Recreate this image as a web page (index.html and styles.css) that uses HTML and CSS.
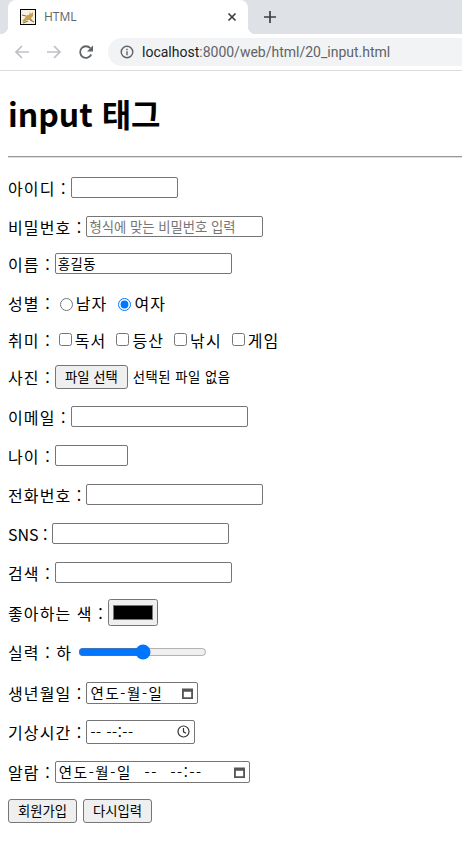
FILE: index.html
```html
<!DOCTYPE html>
<html lang="ko">
<head>
<meta charset="UTF-8">
<meta name="viewport" content="width=device-width, initial-scale=1.0">
<title>HTML</title>
<link rel="stylesheet" href="styles.css">
</head>
<body>
<div class="browser-bar">
    <div class="tab-strip">
        <div class="tab">
            <svg class="favicon" width="16" height="16" viewBox="0 0 16 16">
                <rect x="0.5" y="0.5" width="15" height="15" fill="#f6f1e4" stroke="#000"/>
                <path d="M2 12 L5 9 L7 6 L9 6 L10 3 L11 5 L13 3 L13 7 L11 9 L13 12 L10 11 L7 11 L4 13 Z" fill="#c9a04e"/>
                <path d="M2 6 L6 7 M10 11 L14 13 M3 14 L8 12" stroke="#7c6a45" fill="none"/>
            </svg>
            <span class="tab-title">HTML</span>
            <svg class="tab-close" width="10" height="10" viewBox="0 0 10 10">
                <path d="M1.5 1.5 L8.5 8.5 M8.5 1.5 L1.5 8.5" stroke="#3c4043" stroke-width="1.7" fill="none"/>
            </svg>
        </div>
        <svg class="new-tab" width="12" height="12" viewBox="0 0 12 12">
            <path d="M6 0 V12 M0 6 H12" stroke="#3c4043" stroke-width="1.7" fill="none"/>
        </svg>
    </div>
    <div class="toolbar">
        <svg class="nav-icon" width="16" height="16" viewBox="0 0 16 16">
            <path d="M15 8 H2 M8 2 L2 8 L8 14" stroke="#bdc1c6" stroke-width="1.7" fill="none"/>
        </svg>
        <svg class="nav-icon" width="16" height="16" viewBox="0 0 16 16">
            <path d="M1 8 H14 M8 2 L14 8 L8 14" stroke="#bdc1c6" stroke-width="1.7" fill="none"/>
        </svg>
        <svg class="nav-icon" width="16" height="16" viewBox="0 0 16 16">
            <path d="M13.2 10.5 A5.8 5.8 0 1 1 12.3 4.2" stroke="#5f6368" stroke-width="1.8" fill="none"/>
            <path d="M15 1.5 V7.5 H9 Z" fill="#5f6368"/>
        </svg>
        <div class="omnibox">
            <svg width="14" height="14" viewBox="0 0 14 14">
                <circle cx="7" cy="7" r="5.8" stroke="#5f6368" stroke-width="1.4" fill="none"/>
                <path d="M7 6.2 V10.2 M7 3.8 V5.2" stroke="#5f6368" stroke-width="1.4" fill="none"/>
            </svg>
            <span class="url">localhost<span class="url-path">:8000/web/html/20_input.html</span></span>
        </div>
    </div>
</div>

<div class="page">
    <h1>input 태그</h1>
    <hr>
    <form>
        <div class="row"><span class="label">아이디 :</span><input type="text" class="field short"></div>
        <div class="row tight"><span class="label">비밀번호 :</span><input type="password" class="field" placeholder="형식에 맞는 비밀번호 입력"></div>
        <div class="row"><span class="label">이름 :</span><input type="text" class="field" value="홍길동"></div>
        <div class="row tight">
            <span class="label">성별 :</span>
            <label class="choice"><input type="radio" name="gender">남자</label>
            <label class="choice"><input type="radio" name="gender" checked>여자</label>
        </div>
        <div class="row tight">
            <span class="label">취미 :</span>
            <label class="choice"><input type="checkbox">독서</label>
            <label class="choice"><input type="checkbox">등산</label>
            <label class="choice"><input type="checkbox">낚시</label>
            <label class="choice"><input type="checkbox">게임</label>
        </div>
        <div class="row loose"><span class="label">사진 :</span><button type="button" class="file-btn">파일 선택</button><span class="file-text">선택된 파일 없음</span></div>
        <div class="row"><span class="label">이메일 :</span><input type="email" class="field"></div>
        <div class="row"><span class="label">나이 :</span><input type="number" class="field num"></div>
        <div class="row"><span class="label">전화번호 :</span><input type="tel" class="field"></div>
        <div class="row"><span class="label latin">SNS :</span><input type="url" class="field"></div>
        <div class="row loose"><span class="label">검색 :</span><input type="search" class="field"></div>
        <div class="row"><span class="label">좋아하는 색 :</span><input type="color" value="#000000"></div>
        <div class="row wide"><span class="label">실력 : 하</span><input type="range"></div>
        <div class="row">
            <span class="label">생년월일 :</span>
            <span class="fake-input date-box"><span>연도-월-일</span><svg width="11" height="12" viewBox="0 0 12 13"><path d="M1 2.5 H11 V12 H1 Z M1 4 H11" stroke="#555" stroke-width="2" fill="none"/></svg></span>
        </div>
        <div class="row loose">
            <span class="label">기상시간 :</span>
            <span class="fake-input time-box"><span>-- --:--</span><svg width="13" height="13" viewBox="0 0 13 13"><circle cx="6.5" cy="6.5" r="5.5" stroke="#333" stroke-width="1.2" fill="none"/><path d="M6.5 3 V6.8 L9 8.3" stroke="#333" stroke-width="1.2" fill="none"/></svg></span>
        </div>
        <div class="row">
            <span class="label">알람 :</span>
            <span class="fake-input alarm-box"><span>연도-월-일 -- --:--</span><svg width="11" height="12" viewBox="0 0 12 13"><path d="M1 2.5 H11 V12 H1 Z M1 4 H11" stroke="#555" stroke-width="2" fill="none"/></svg></span>
        </div>
        <div class="row actions">
            <button type="submit">회원가입</button>
            <button type="reset">다시입력</button>
        </div>
    </form>
</div>
</body>
</html>
```

FILE: styles.css
```css
body {
    margin: 0;
    font-family: "Noto Sans CJK KR", "Liberation Sans", sans-serif;
    font-size: 16px;
    line-height: 22px;
    color: #000;
    background-color: #fff;
}
.browser-bar {
    height: 70px;
    border-bottom: 1px solid #dadce0;
    font-family: "Open Sans", "Liberation Sans", sans-serif;
}
.tab-strip {
    display: flex;
    align-items: center;
    height: 34px;
    padding-left: 8px;
    background-color: #dee1e6;
}
.tab {
    display: flex;
    align-items: center;
    position: relative;
    box-sizing: border-box;
    width: 240px;
    height: 34px;
    padding: 0 11px 0 12px;
    background-color: #fff;
    border-radius: 8px 8px 0 0;
}
.tab::before,
.tab::after {
    content: "";
    position: absolute;
    bottom: 0;
    width: 8px;
    height: 8px;
}
.tab::before {
    left: -8px;
    background: radial-gradient(circle at 0 0, #dee1e6 8px, #fff 8.5px);
}
.tab::after {
    right: -8px;
    background: radial-gradient(circle at 100% 0, #dee1e6 8px, #fff 8.5px);
}
.favicon {
    flex: none;
}
.tab-title {
    flex: 1;
    margin-left: 8px;
    font-size: 12px;
    color: #5f6368;
}
.new-tab {
    margin-left: 16px;
}
.toolbar {
    display: flex;
    align-items: center;
    height: 36px;
    padding-left: 14px;
}
.nav-icon {
    margin-right: 16px;
}
.omnibox {
    display: flex;
    align-items: center;
    flex: 1;
    height: 28px;
    margin-left: -2px;
    padding-left: 12px;
    background-color: #f1f3f4;
    border-radius: 14px 0 0 14px;
}
.url {
    margin-left: 8px;
    font-family: Roboto, "Liberation Sans", sans-serif;
    font-size: 14px;
    color: #202124;
    white-space: nowrap;
}
.url-path {
    color: #5f6368;
}
.page {
    padding-left: 8px;
}
h1 {
    margin: 0;
    padding-top: 21px;
    font-size: 32px;
    line-height: 43px;
    font-weight: bold;
}
hr {
    margin: 21px 0 0;
    border: none;
    border-top: 1px solid #999;
    border-bottom: 1px solid #ddd;
}
form {
    padding-top: 18px;
    letter-spacing: 1.1px;
}
.row {
    display: flex;
    align-items: center;
    height: 23px;
    margin-bottom: 16px;
}
.row.tight {
    margin-bottom: 14px;
}
.row.loose {
    margin-bottom: 17px;
}
.row.wide {
    margin-bottom: 18px;
}
.label {
    margin-right: 4px;
    white-space: nowrap;
}
.label.latin {
    letter-spacing: 0;
}
.choice {
    display: flex;
    align-items: center;
    margin-right: 6px;
}
input,
button,
.fake-input {
    flex: none;
    font-family: "Noto Sans CJK KR", "Liberation Sans", sans-serif;
    font-size: 13.33px;
}
.field {
    box-sizing: border-box;
    width: 177px;
    height: 21px;
    padding: 1px 2px;
    border: 1px solid #767676;
    border-radius: 2px;
    letter-spacing: 0.5px;
}
.field::placeholder {
    letter-spacing: 0;
}
.field.short {
    width: 107px;
}
.field.num {
    width: 73px;
}
input[type="color"] {
    box-sizing: border-box;
    width: 50px;
    height: 27px;
    margin: 0;
}
input[type="range"] {
    width: 129px;
    margin-left: 2px;
    accent-color: #0075ff;
}
button {
    box-sizing: border-box;
    height: 24px;
    padding: 0 6px;
    background-color: #efefef;
    border: 1px solid #767676;
    border-radius: 3px;
    color: #000;
    letter-spacing: 0;
}
.file-btn {
    width: 73px;
}
.file-text {
    margin-left: 5px;
    font-size: 13.33px;
    letter-spacing: 0.5px;
}
.actions {
    gap: 6px;
}
.actions button {
    width: 69px;
}
.fake-input {
    display: flex;
    align-items: center;
    justify-content: space-between;
    box-sizing: border-box;
    height: 22px;
    padding: 0 4px 0 3px;
    border: 1px solid #767676;
    border-radius: 2px;
    background-color: #fff;
    font-size: 14.5px;
    letter-spacing: 1.6px;
    white-space: pre;
}
.date-box {
    width: 112px;
}
.time-box {
    width: 109px;
    height: 24px;
    letter-spacing: 0.6px;
}
.alarm-box {
    width: 195px;
    word-spacing: 7px;
}
```
